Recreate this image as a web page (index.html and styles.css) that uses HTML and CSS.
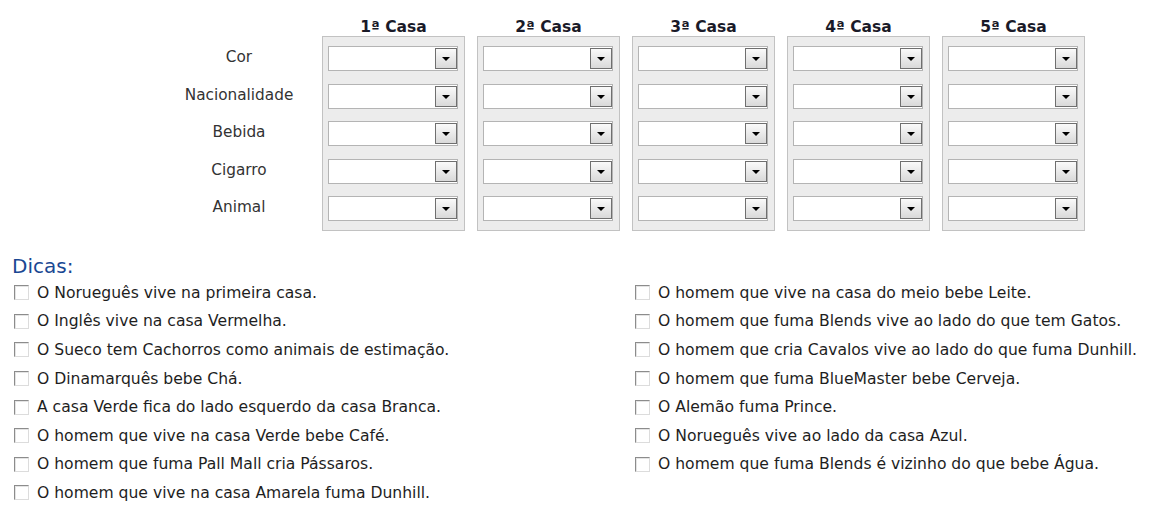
FILE: index.html
```html
<!DOCTYPE html>
<html lang="pt">
<head>
<meta charset="utf-8">
<title>Enigma de Einstein</title>
<link rel="stylesheet" href="styles.css">
</head>
<body>
<div class="board">
  <div class="labels">
    <div class="head"></div>
    <div class="label-list">
      <div class="label">Cor</div>
      <div class="label">Nacionalidade</div>
      <div class="label">Bebida</div>
      <div class="label">Cigarro</div>
      <div class="label">Animal</div>
    </div>
  </div>
  <div class="house">
    <div class="head">1ª Casa</div>
    <div class="box">
      <div class="sel"><span class="btn"></span></div>
      <div class="sel"><span class="btn"></span></div>
      <div class="sel"><span class="btn"></span></div>
      <div class="sel"><span class="btn"></span></div>
      <div class="sel"><span class="btn"></span></div>
    </div>
  </div>
  <div class="house">
    <div class="head">2ª Casa</div>
    <div class="box">
      <div class="sel"><span class="btn"></span></div>
      <div class="sel"><span class="btn"></span></div>
      <div class="sel"><span class="btn"></span></div>
      <div class="sel"><span class="btn"></span></div>
      <div class="sel"><span class="btn"></span></div>
    </div>
  </div>
  <div class="house">
    <div class="head">3ª Casa</div>
    <div class="box">
      <div class="sel"><span class="btn"></span></div>
      <div class="sel"><span class="btn"></span></div>
      <div class="sel"><span class="btn"></span></div>
      <div class="sel"><span class="btn"></span></div>
      <div class="sel"><span class="btn"></span></div>
    </div>
  </div>
  <div class="house">
    <div class="head">4ª Casa</div>
    <div class="box">
      <div class="sel"><span class="btn"></span></div>
      <div class="sel"><span class="btn"></span></div>
      <div class="sel"><span class="btn"></span></div>
      <div class="sel"><span class="btn"></span></div>
      <div class="sel"><span class="btn"></span></div>
    </div>
  </div>
  <div class="house">
    <div class="head">5ª Casa</div>
    <div class="box">
      <div class="sel"><span class="btn"></span></div>
      <div class="sel"><span class="btn"></span></div>
      <div class="sel"><span class="btn"></span></div>
      <div class="sel"><span class="btn"></span></div>
      <div class="sel"><span class="btn"></span></div>
    </div>
  </div>
</div>

<h2 class="dicas-title">Dicas:</h2>
<div class="clues">
  <div class="clue"><span class="cb"></span><span>O Norueguês vive na primeira casa.</span></div>
  <div class="clue"><span class="cb"></span><span>O Inglês vive na casa Vermelha.</span></div>
  <div class="clue"><span class="cb"></span><span>O Sueco tem Cachorros como animais de estimação.</span></div>
  <div class="clue"><span class="cb"></span><span>O Dinamarquês bebe Chá.</span></div>
  <div class="clue"><span class="cb"></span><span>A casa Verde fica do lado esquerdo da casa Branca.</span></div>
  <div class="clue"><span class="cb"></span><span>O homem que vive na casa Verde bebe Café.</span></div>
  <div class="clue"><span class="cb"></span><span>O homem que fuma Pall Mall cria Pássaros.</span></div>
  <div class="clue"><span class="cb"></span><span>O homem que vive na casa Amarela fuma Dunhill.</span></div>
  <div class="clue"><span class="cb"></span><span>O homem que vive na casa do meio bebe Leite.</span></div>
  <div class="clue"><span class="cb"></span><span>O homem que fuma Blends vive ao lado do que tem Gatos.</span></div>
  <div class="clue"><span class="cb"></span><span>O homem que cria Cavalos vive ao lado do que fuma Dunhill.</span></div>
  <div class="clue"><span class="cb"></span><span>O homem que fuma BlueMaster bebe Cerveja.</span></div>
  <div class="clue"><span class="cb"></span><span>O Alemão fuma Prince.</span></div>
  <div class="clue"><span class="cb"></span><span>O Norueguês vive ao lado da casa Azul.</span></div>
  <div class="clue"><span class="cb"></span><span>O homem que fuma Blends é vizinho do que bebe Água.</span></div>
</div>
</body>
</html>
```

FILE: styles.css
```css
* { box-sizing: border-box; }
body {
  margin: 0;
  background: #ffffff;
  font-family: "DejaVu Sans", Verdana, sans-serif;
  font-size: 15px;
  color: #222;
}
.board {
  display: flex;
  gap: 12px;
  padding: 14px 0 0 168px;
}
.labels { width: 142px; }
.head {
  height: 22px;
  line-height: 26px;
  text-align: center;
  font-weight: bold;
  font-size: 15.5px;
  color: #1a1a28;
}
.label-list { padding-top: 9px; }
.label {
  height: 25px;
  line-height: 25px;
  margin-bottom: 12.5px;
  text-align: center;
  font-size: 15.3px;
  color: #333;
}
.house { width: 143px; }
.box {
  background: #ececec;
  border: 1px solid #c2c2c2;
  padding: 9px 6px 9px 5px;
  display: flex;
  flex-direction: column;
  gap: 12.5px;
}
.sel {
  height: 25px;
  background: #fff;
  border: 1px solid #b4b4b4;
  padding: 1px 0 1px 0;
  display: flex;
  justify-content: flex-end;
}
.btn {
  width: 22px;
  height: 100%;
  border: 1px solid #6f6f6f;
  background: linear-gradient(#fafafa, #d9d9d9);
  display: flex;
  align-items: center;
  justify-content: center;
}
.btn::after {
  content: "";
  border-left: 4px solid transparent;
  border-right: 4px solid transparent;
  border-top: 4px solid #000;
  margin-top: 1px;
}
.dicas-title {
  margin: 21px 0 0 12px;
  font-size: 20px;
  font-weight: normal;
  color: #1a4893;
  line-height: 24px;
}
.clues {
  display: grid;
  grid-template-columns: 621px 1fr;
  grid-template-rows: repeat(8, 28.6px);
  grid-auto-flow: column;
  padding-left: 14px;
  margin-top: 1px;
}
.clue {
  display: flex;
  align-items: center;
  gap: 8px;
  font-size: 15.6px;
  color: #1e1e1e;
  white-space: nowrap;
}
.cb {
  width: 15px;
  height: 15px;
  flex: none;
  background: #fff;
  border: 1px solid;
  border-color: #8c8c8c #dcdcdc #dcdcdc #8c8c8c;
  box-shadow: inset 1px 1px 0 #e4e4e4;
}
```
